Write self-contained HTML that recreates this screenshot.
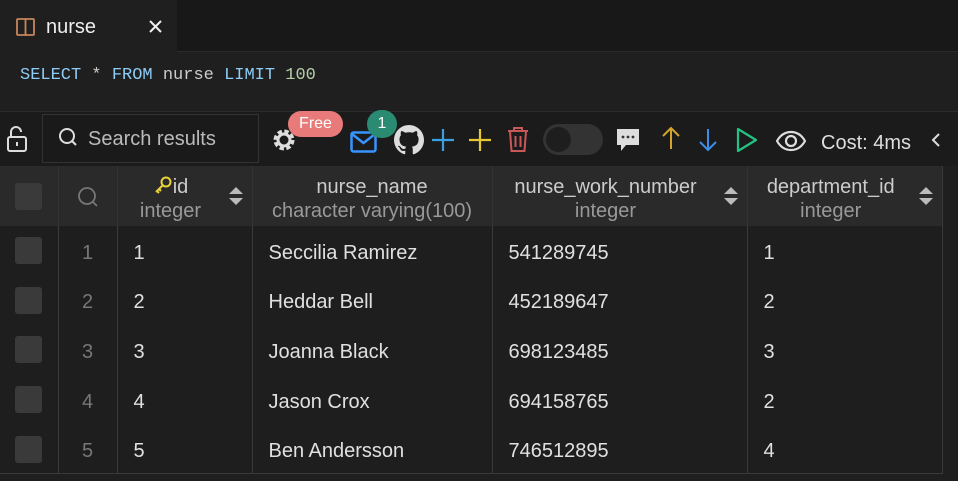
<!DOCTYPE html>
<html><head><style>
*{margin:0;padding:0;box-sizing:border-box}
body{width:958px;height:481px;background:#1f1f1f;font-family:"Liberation Sans",sans-serif;color:#ccc;position:relative;overflow:hidden}
.abs{position:absolute}
.tabbar{left:0;top:0;width:958px;height:52px;background:#181818;border-bottom:1px solid #2b2b2b}
.tab{left:0;top:0;width:177px;height:52px;background:#1f1f1f}
.sql{left:20px;top:66px;font-family:"Liberation Mono",monospace;font-size:17px;color:#ccc}
.tb{left:0;top:111px;width:958px;height:55px;border-top:1px solid #2b2b2b;background:#1b1b1b}
.search{left:42px;top:114px;width:217px;height:49px;border:1px solid #333;background:#1a1a1a}
table{position:absolute;left:0;top:166px;border-collapse:collapse;width:942px;table-layout:fixed}
th{background:#2a2a2a;height:60px;font-weight:normal;font-size:20px;color:#ccc;line-height:24px;position:relative;border-left:1px solid #333;padding-top:5px}
th.s{padding-right:28px}
th small{display:block;font-size:20px;color:#999}
td{height:49.6px;border-left:1px solid #3a3a3a;font-size:20px;color:#e0e0e0;padding-left:16px;padding-top:5px;background:#1e1e1e}
td.n{color:#777;text-align:center;padding:0}
.cb{width:27px;height:27px;background:#3a3a3a;border-radius:3px;margin:0 auto}
.sort{position:absolute;right:8px;top:20px;width:16px;height:20px}
</style></head><body>
<div class="abs tabbar"></div>
<div class="abs tab">
 <svg class="abs" style="left:16px;top:18px" width="19" height="18"><rect x="1" y="1" width="17" height="16" fill="none" stroke="#c8875a" stroke-width="1.8" rx="1"/><line x1="9.5" y1="1" x2="9.5" y2="17" stroke="#c8875a" stroke-width="1.8"/></svg>
 <div class="abs" style="left:46px;top:16px;font-size:20px;color:#eee">nurse</div>
 <svg class="abs" style="left:149px;top:20px" width="13" height="13"><path d="M1 1L12 12M12 1L1 12" stroke="#eee" stroke-width="2"/></svg>
</div>
<div class="abs sql"><span style="color:#8ecdf6">SELECT</span> * <span style="color:#8ecdf6">FROM</span> nurse <span style="color:#8ecdf6">LIMIT</span> <span style="color:#b5cea8">100</span></div>
<div class="abs tb"></div>
<svg class="abs" style="left:6px;top:125px" width="22" height="28"><path d="M5 12V7a5 5 0 0 1 10 0" fill="none" stroke="#ddd" stroke-width="2"/><rect x="2" y="12" width="18" height="14" rx="2" fill="none" stroke="#ddd" stroke-width="2"/><line x1="11" y1="17" x2="11" y2="21" stroke="#ddd" stroke-width="2"/></svg>
<div class="abs search"><svg class="abs" style="left:15px;top:12px" width="20" height="20"><circle cx="9" cy="9" r="7" fill="none" stroke="#ddd" stroke-width="2"/><path d="M14 14l4 4" stroke="#ddd" stroke-width="2"/></svg><div class="abs" style="left:45px;top:13px;font-size:20px;color:#bbb">Search results</div></div>
<svg class="abs" style="left:271px;top:127px" width="26" height="26"><circle cx="13" cy="13" r="8" fill="none" stroke="#ddd" stroke-width="5" stroke-dasharray="4 2.3"/><circle cx="13" cy="13" r="6" fill="none" stroke="#ddd" stroke-width="3"/></svg>
<div class="abs" style="left:288px;top:111px;width:55px;height:26px;border-radius:13px;background:#e87a7a;color:#fff;font-size:16px;text-align:center;line-height:26px">Free</div>
<svg class="abs" style="left:350px;top:131px" width="27" height="22"><rect x="1.5" y="1.5" width="24" height="19" rx="2" fill="none" stroke="#3794ff" stroke-width="2.5"/><path d="M2 3l11.5 9L25 3" fill="none" stroke="#3794ff" stroke-width="2.5"/></svg>
<div class="abs" style="left:367px;top:110px;width:30px;height:28px;border-radius:14px;background:#2a8a72;color:#fff;font-size:16px;text-align:center;line-height:28px">1</div>
<svg class="abs" style="left:394px;top:125px" width="30" height="30" viewBox="0 0 16 16"><path fill="#ddd" d="M8 0C3.58 0 0 3.58 0 8c0 3.54 2.29 6.530 5.47 7.59.4.07.55-.17.55-.38 0-.19-.01-.82-.01-1.49-2.01.37-2.530-.49-2.69-.94-.09-.23-.48-.94-.82-1.13-.28-.15-.68-.52-.01-.53.63-.01 1.08.58 1.23.82.72 1.21 1.87.87 2.33.66.07-.52.28-.87.51-1.07-1.78-.2-3.64-.89-3.64-3.95 0-.87.31-1.59.82-2.15-.08-.2-.36-1.02.08-2.12 0 0 .67-.21 2.2.82.64-.18 1.32-.27 2-.27.68 0 1.36.09 2 .27 1.53-1.04 2.2-.82 2.2-.82.44 1.1.16 1.92.08 2.12.51.56.82 1.27.82 2.15 0 3.07-1.87 3.75-3.65 3.95.29.25.54.73.54 1.48 0 1.07-.01 1.93-.01 2.2 0 .21.15.46.55.38A8.013 8.013 0 0016 8c0-4.42-3.58-8-8-8z"/></svg>
<svg class="abs" style="left:431px;top:128px" width="24" height="24"><path d="M12 1v22M1 12h22" stroke="#3aa0e0" stroke-width="2.2"/></svg>
<svg class="abs" style="left:468px;top:128px" width="24" height="24"><path d="M12 1v22M1 12h22" stroke="#e8c832" stroke-width="2.2"/></svg>
<svg class="abs" style="left:506px;top:126px" width="24" height="27"><path d="M2 5h20M8 5V2h8v3M4 5l1.5 20h13L20 5M9.5 10v11M14.5 10v11" fill="none" stroke="#c75858" stroke-width="2"/></svg>
<div class="abs" style="left:543px;top:124px;width:60px;height:31px;border-radius:16px;background:#333"><div class="abs" style="left:3px;top:3px;width:25px;height:25px;border-radius:50%;background:#1e1e1e"></div></div>
<svg class="abs" style="left:616px;top:128px" width="24" height="25"><path d="M1 1h22v16H10l-5 6v-6H1z" fill="#ddd"/><circle cx="7" cy="9" r="1.4" fill="#333"/><circle cx="12" cy="9" r="1.4" fill="#333"/><circle cx="17" cy="9" r="1.4" fill="#333"/></svg>
<svg class="abs" style="left:661px;top:126px" width="20" height="24"><path d="M10 23V2M2 10l8-8 8 8" fill="none" stroke="#d4a42a" stroke-width="2"/></svg>
<svg class="abs" style="left:698px;top:128px" width="20" height="24"><path d="M10 1v21M2 14l8 8 8-8" fill="none" stroke="#3b8eea" stroke-width="2"/></svg>
<svg class="abs" style="left:736px;top:127px" width="22" height="26"><path d="M2 2l18 11L2 24z" fill="none" stroke="#23c483" stroke-width="2.2" stroke-linejoin="round"/></svg>
<svg class="abs" style="left:776px;top:130px" width="30" height="22"><path d="M1 11C5 4 10 2 15 2s10 2 14 9c-4 7-9 9-14 9S5 18 1 11z" fill="none" stroke="#ddd" stroke-width="2.2"/><circle cx="15" cy="11" r="5" fill="none" stroke="#ddd" stroke-width="2.2"/></svg>
<div class="abs" style="left:821px;top:132px;font-size:20px;color:#ddd">Cost: 4ms</div>
<svg class="abs" style="left:931px;top:132px" width="10" height="16"><path d="M8 2L2 8l6 6" fill="none" stroke="#ddd" stroke-width="2"/></svg>

<table>
<colgroup><col style="width:58px"><col style="width:59px"><col style="width:135px"><col style="width:240px"><col style="width:255px"><col style="width:195px"></colgroup>
<tr>
<th style="border-left:none;padding-top:0"><div class="cb"></div></th>
<th style="padding-top:0"><svg width="22" height="22" style="vertical-align:middle"><circle cx="10" cy="10" r="8" fill="none" stroke="#777" stroke-width="1.8"/><path d="M16 16l4 4" stroke="#777" stroke-width="1.8"/></svg></th>
<th class="s"><svg width="20" height="20" style="vertical-align:-2px"><circle cx="13" cy="7" r="4.5" fill="none" stroke="#e8d23a" stroke-width="2"/><path d="M10 10L3 17M4 16l2 2M6 14l2 2" fill="none" stroke="#e8d23a" stroke-width="2"/></svg>id<small>integer</small><svg class="sort" viewBox="0 0 16 20"><path d="M8 1l7 7H1zM8 19l7-7H1z" fill="#bbb"/></svg></th>
<th>nurse_name<small>character varying(100)</small></th>
<th class="s">nurse_work_number<small>integer</small><svg class="sort" viewBox="0 0 16 20"><path d="M8 1l7 7H1zM8 19l7-7H1z" fill="#bbb"/></svg></th>
<th class="s">department_id<small>integer</small><svg class="sort" viewBox="0 0 16 20"><path d="M8 1l7 7H1zM8 19l7-7H1z" fill="#bbb"/></svg></th>
</tr>
<tr><td class="n" style="border-left:none"><div class="cb"></div></td><td class="n" style="padding-top:5px">1</td><td>1</td><td>Seccilia Ramirez</td><td>541289745</td><td>1</td></tr>
<tr><td class="n" style="border-left:none"><div class="cb"></div></td><td class="n" style="padding-top:5px">2</td><td>2</td><td>Heddar Bell</td><td>452189647</td><td>2</td></tr>
<tr><td class="n" style="border-left:none"><div class="cb"></div></td><td class="n" style="padding-top:5px">3</td><td>3</td><td>Joanna Black</td><td>698123485</td><td>3</td></tr>
<tr><td class="n" style="border-left:none"><div class="cb"></div></td><td class="n" style="padding-top:5px">4</td><td>4</td><td>Jason Crox</td><td>694158765</td><td>2</td></tr>
<tr><td class="n" style="border-left:none"><div class="cb"></div></td><td class="n" style="padding-top:5px">5</td><td>5</td><td>Ben Andersson</td><td>746512895</td><td>4</td></tr>
</table>
<div class="abs" style="left:942px;top:166px;width:1px;height:308px;background:#3a3a3a"></div>
<div class="abs" style="left:0;top:473px;width:943px;height:1px;background:#3a3a3a"></div>
</body></html>
